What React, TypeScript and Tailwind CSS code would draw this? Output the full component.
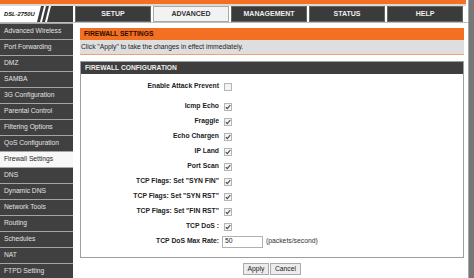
import React from 'react';

const menuItems = [
  'Advanced Wireless',
  'Port Forwarding',
  'DMZ',
  'SAMBA',
  '3G Configuration',
  'Parental Control',
  'Filtering Options',
  'QoS Configuration',
  'Firewall Settings',
  'DNS',
  'Dynamic DNS',
  'Network Tools',
  'Routing',
  'Schedules',
  'NAT',
  'FTPD Setting',
];

const tabs = ['SETUP', 'ADVANCED', 'MANAGEMENT', 'STATUS', 'HELP'];

const checkRows = [
  'Icmp Echo',
  'Fraggle',
  'Echo Chargen',
  'IP Land',
  'Port Scan',
  'TCP Flags: Set "SYN FIN"',
  'TCP Flags: Set "SYN RST"',
  'TCP Flags: Set "FIN RST"',
  'TCP DoS :',
];

const Box: React.FC<{ checked?: boolean }> = ({ checked }) => (
  <span className="flex h-[8px] w-[8px] items-center justify-center border border-[#b5b5b5] bg-[#f4f4f4]">
    {checked && (
      <svg width="6" height="6" viewBox="0 0 6 6">
        <path d="M0.8 3.2 L2.3 4.7 L5.3 1" fill="none" stroke="#444" strokeWidth="1.1" />
      </svg>
    )}
  </span>
);

export default function App() {
  return (
    <div className="flex h-[278px] w-[474px] overflow-hidden bg-white font-['Liberation_Sans',Arial,sans-serif]">
      <div className="flex w-[468px] flex-col">
        {/* top bar */}
        <div className="h-[4px] w-[466px] shrink-0 bg-[#f36f21]" />
        <div className="h-[2px] w-[466px] shrink-0 bg-[#d9d9d9]" />

        {/* tabs */}
        <div className="flex h-[16px] shrink-0 gap-[2px] bg-white">
          <div className="relative flex w-[73px] items-center bg-[#3b3b3b]">
            <div className="flex h-full w-[41px] items-center bg-white pl-[4px] [clip-path:polygon(0_0,100%_0,calc(100%-4px)_100%,0_100%)]">
              <span className="text-[5.8px] font-bold italic text-[#111]">DSL-2750U</span>
            </div>
            <svg className="absolute left-[39px] top-0" width="16" height="16" viewBox="0 0 16 16">
              <path d="M5 0 L7 0 L3 16 L1 16 Z" fill="#fff" />
              <path d="M10 0 L12 0 L8 16 L6 16 Z" fill="#fff" />
            </svg>
          </div>
          {tabs.map((t) => (
            <div
              key={t}
              className={
                t === 'ADVANCED'
                  ? 'flex w-[76px] items-center justify-center border border-[#a9a9a9] bg-[#f2f2f2] text-[7px] font-bold text-[#333]'
                  : 'flex w-[76px] items-center justify-center border border-[#666] bg-[#3b3b3b] text-[7px] font-bold text-[#eee]'
              }
            >
              {t}
            </div>
          ))}
        </div>
        <div className="h-[1px] shrink-0 bg-[#bdbdbd]" />

        <div className="flex min-h-0 flex-1">
          {/* sidebar */}
          <div className="flex w-[73px] shrink-0 flex-col">
            {menuItems.map((m) => (
              <div
                key={m}
                className={
                  m === 'Firewall Settings'
                    ? 'flex h-[16px] shrink-0 items-center border-t border-[#a5a5a5] bg-[#f7f7f7] pl-[4px] text-[6.7px] text-[#222]'
                    : 'flex h-[16px] shrink-0 items-center border-t border-[#a5a5a5] bg-[#404040] pl-[4px] text-[6.7px] text-[#e2e2e2]'
                }
              >
                {m}
              </div>
            ))}
          </div>

          {/* content */}
          <div className="ml-[7px] flex w-[384px] flex-col pt-[5px]">
            <div className="flex h-[12px] items-center bg-[#f36f21] pl-[4px] text-[6.7px] font-bold text-[#2a0d00]">
              FIREWALL SETTINGS
            </div>
            <div className="flex h-[15px] items-center border-b border-[#e9a27a] bg-[#dedede] pl-[1px] text-[6.7px] text-[#222]">
              Click "Apply" to take the changes in effect immediately.
            </div>

            <div className="mt-[6px] flex flex-col border border-[#9e9e9e] pb-[8px]">
              <div className="flex h-[12px] items-center bg-[#3e3e3e] pl-[4px] text-[6.7px] font-bold text-[#f0f0f0]">
                FIREWALL CONFIGURATION
              </div>
              <div className="mt-[5px] grid grid-cols-[138px_1fr] gap-x-[5px]">
                <div className="flex h-[15px] items-center justify-end text-[6.8px] font-bold text-[#222]">
                  Enable Attack Prevent
                </div>
                <div className="flex h-[15px] items-center">
                  <Box />
                </div>
                <div className="col-span-2 h-[5px]" />
                {checkRows.map((r) => (
                  <React.Fragment key={r}>
                    <div className="flex h-[15px] items-center justify-end text-[6.8px] font-bold text-[#222]">{r}</div>
                    <div className="flex h-[15px] items-center">
                      <Box checked />
                    </div>
                  </React.Fragment>
                ))}
                <div className="flex h-[15px] items-center justify-end text-[6.8px] font-bold text-[#222]">
                  TCP DoS Max Rate:
                </div>
                <div className="flex h-[15px] items-center gap-[3px]">
                  <div className="-ml-[2px] flex h-[12px] w-[41px] items-center border border-[#b0b0b0] pl-[2px] text-[6.8px] text-[#222]">
                    50
                  </div>
                  <span className="text-[6.8px] text-[#333]">(packets/second)</span>
                </div>
              </div>
            </div>

            <div className="mt-[5px] flex justify-center gap-[1px]">
              <div className="flex h-[12px] w-[26px] items-center justify-center border border-[#aaa] bg-[#ececec] text-[6.8px] text-[#222]">
                Apply
              </div>
              <div className="flex h-[12px] w-[31px] items-center justify-center border border-[#aaa] bg-[#ececec] text-[6.8px] text-[#222]">
                Cancel
              </div>
            </div>
          </div>
        </div>
      </div>
      <div className="w-[6px] shrink-0 border-l border-[#a8a8a8] bg-[#777]" />
    </div>
  );
}
